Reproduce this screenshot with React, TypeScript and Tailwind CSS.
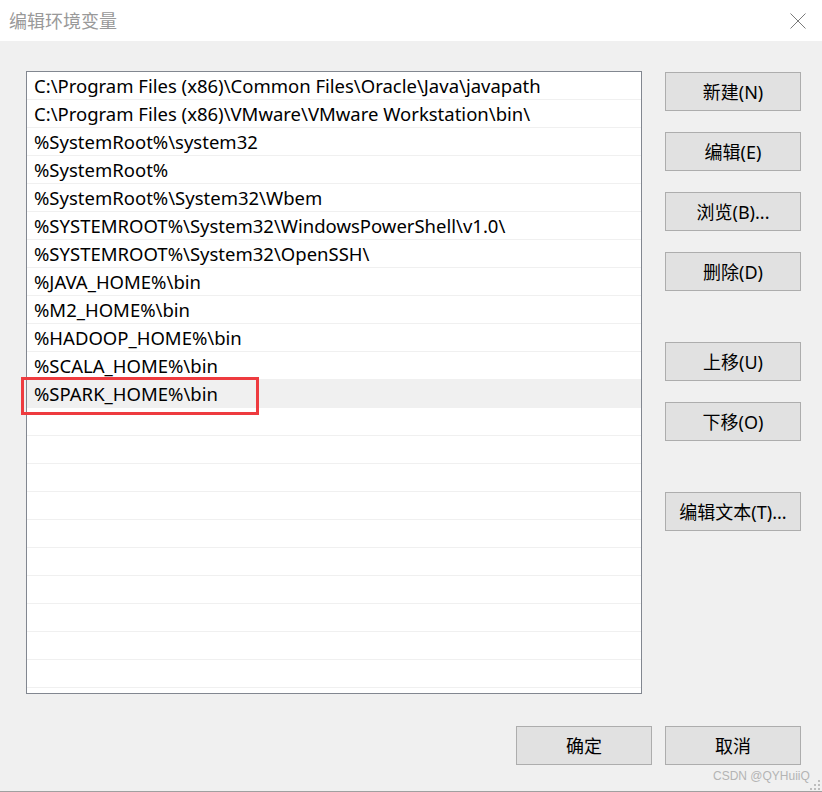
import React from 'react'

const paths = [
  'C:\\Program Files (x86)\\Common Files\\Oracle\\Java\\javapath',
  'C:\\Program Files (x86)\\VMware\\VMware Workstation\\bin\\',
  '%SystemRoot%\\system32',
  '%SystemRoot%',
  '%SystemRoot%\\System32\\Wbem',
  '%SYSTEMROOT%\\System32\\WindowsPowerShell\\v1.0\\',
  '%SYSTEMROOT%\\System32\\OpenSSH\\',
  '%JAVA_HOME%\\bin',
  '%M2_HOME%\\bin',
  '%HADOOP_HOME%\\bin',
  '%SCALA_HOME%\\bin',
  '%SPARK_HOME%\\bin',
]

const SELECTED = 11
const TOTAL_ROWS = 23

function Btn({ label, className = '' }: { label: string; className?: string }) {
  return (
    <button
      className={`h-[39px] w-[136px] border border-[#adadad] bg-[#e1e1e1] pt-[1px] text-[18px] text-black ${className}`}
    >
      {label}
    </button>
  )
}

export default function App() {
  const rows = Array.from({ length: TOTAL_ROWS }, (_, i) => paths[i] ?? '')

  return (
    <div
      className="relative flex h-[792px] w-[822px] flex-col overflow-hidden bg-[#f0f0f0]"
      style={{ fontFamily: '"Noto Sans", "Noto Sans CJK SC", sans-serif' }}
    >
      {/* title bar */}
      <div className="flex h-[41px] shrink-0 items-center justify-between bg-white pl-[9px] pr-[16px]">
        <span className="text-[18px] leading-none text-[#999999]">编辑环境变量</span>
        <svg width="16" height="16" viewBox="0 0 16 16" className="text-[#7a7a7a]">
          <path d="M0.5 0.5 L15.5 15.5 M15.5 0.5 L0.5 15.5" stroke="currentColor" strokeWidth="1" fill="none" />
        </svg>
      </div>

      <div className="flex flex-1 flex-col pl-[26px] pt-[30px]">
        <div className="flex">
          {/* list */}
          <div className="relative h-[623px] w-[616px] overflow-hidden border border-[#828790] bg-white">
            {rows.map((text, i) => (
              <div
                key={i}
                className={`flex h-[28px] items-center border-b border-[#f0f0f0] pl-[7px] pt-[2px] text-[18.5px] leading-none text-black ${
                  i === SELECTED ? 'bg-[#f0f0f0]' : ''
                }`}
              >
                <span className="whitespace-nowrap">{text}</span>
              </div>
            ))}
          </div>

          {/* side buttons */}
          <div className="ml-[23px] flex flex-col pt-[1px]">
            <Btn label="新建(N)" />
            <Btn label="编辑(E)" className="mt-[21px]" />
            <Btn label="浏览(B)..." className="mt-[21px]" />
            <Btn label="删除(D)" className="mt-[21px]" />
            <Btn label="上移(U)" className="mt-[51px]" />
            <Btn label="下移(O)" className="mt-[21px]" />
            <Btn label="编辑文本(T)..." className="mt-[51px]" />
          </div>
        </div>

        {/* bottom buttons */}
        <div className="mt-[32px] flex justify-end gap-[13px] pr-[21px]">
          <Btn label="确定" />
          <Btn label="取消" />
        </div>
      </div>

      {/* red highlight box */}
      <div className="absolute left-[21px] top-[377px] h-[38px] w-[238px] border-[3px] border-[#ee3b3f]" />

      {/* watermark */}
      <span
        className="absolute left-[713px] top-[769px] text-[12px] leading-[14px] text-[#b4b4b4]"
        style={{ fontFamily: '"Liberation Sans", sans-serif' }}
      >
        CSDN @QYHuiiQ
      </span>

      {/* resize grip */}
      <svg width="10" height="10" viewBox="0 0 10 10" className="absolute bottom-[2px] right-[2px]">
        {[
          [8, 0],
          [4, 4],
          [8, 4],
          [0, 8],
          [4, 8],
          [8, 8],
        ].map(([x, y], i) => (
          <rect key={i} x={x} y={y} width="2" height="2" fill="#bdbdbd" />
        ))}
      </svg>

      <div className="absolute bottom-0 left-0 h-[1px] w-full bg-[#a0a0a0]" />
    </div>
  )
}
